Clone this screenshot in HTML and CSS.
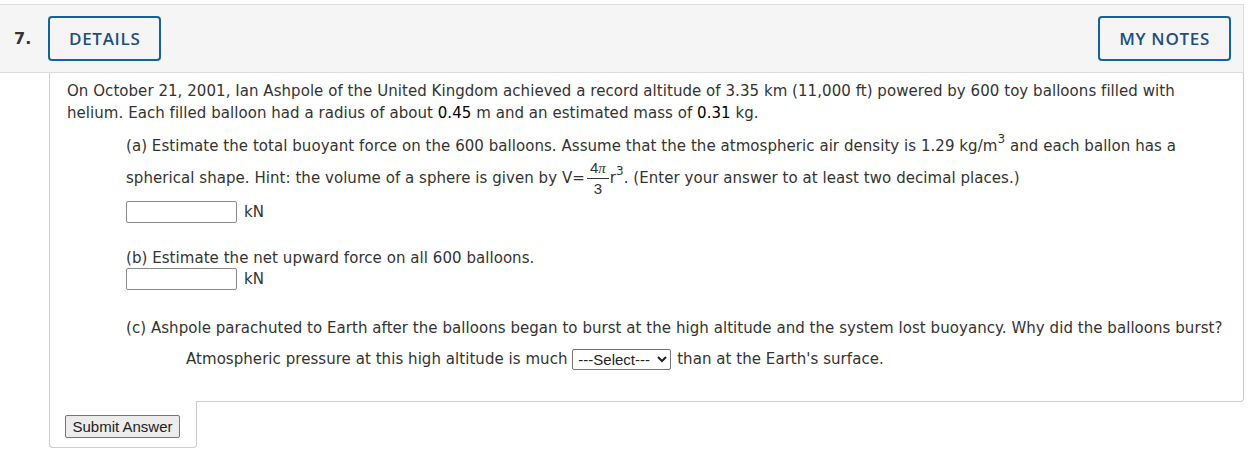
FILE: index.html
```html
<!DOCTYPE html>
<html>
<head>
<meta charset="utf-8">
<link rel="stylesheet" href="styles.css">
</head>
<body>
<div class="question">
  <div class="qhead">
    <span class="qnum">7.</span>
    <button class="hbtn">DETAILS</button>
    <span class="spacer"></span>
    <button class="hbtn">MY NOTES</button>
  </div>
  <div class="qbody">
    <p class="intro">On October 21, 2001, Ian Ashpole of the United Kingdom achieved a record altitude of 3.35 km (11,000 ft) powered by 600 toy balloons filled with helium. Each filled balloon had a radius of about <span class="val">0.45</span> m and an estimated mass of <span class="val">0.31</span> kg.</p>
    <div class="part pa">
      <p class="ptext">(a) Estimate the total buoyant force on the 600 balloons. Assume that the the atmospheric air density is 1.29 kg/m<sup>3</sup> and each ballon has a spherical shape. Hint: the volume of a sphere is given by V=<span class="frac"><span class="num">4<i>π</i></span><span class="den">3</span></span>r<sup>3</sup>. (Enter your answer to at least two decimal places.)</p>
      <div class="ans"><input class="box" type="text"><span class="unit">kN</span></div>
    </div>
    <div class="part pb">
      <p class="ptext">(b) Estimate the net upward force on all 600 balloons.</p>
      <div class="ans"><input class="box" type="text"><span class="unit">kN</span></div>
    </div>
    <div class="part pc">
      <p class="ptext">(c) Ashpole parachuted to Earth after the balloons began to burst at the high altitude and the system lost buoyancy. Why did the balloons burst?</p>
      <p class="sel-line">Atmospheric pressure at this high altitude is much <select class="sel"><option>---Select---</option><option>greater</option><option>less</option></select> than at the Earth's surface.</p>
    </div>
  </div>
  <div class="qfoot">
    <button class="submit">Submit Answer</button>
  </div>
</div>
</body>
</html>
```

FILE: styles.css
```css
* { box-sizing: border-box; }
body {
  margin: 0;
  padding-top: 4px;
  background: #fff;
  font-family: "DejaVu Sans", Verdana, sans-serif;
  color: #333;
}
.question { width: 1244px; }
.qhead {
  display: flex;
  align-items: center;
  height: 69px;
  background: #f5f5f5;
  border-top: 1px solid #dcdcdc;
  border-right: 1px solid #dcdcdc;
  border-bottom: 1px solid #dcdcdc;
  padding: 0 12px 0 14px;
}
.qnum {
  font-weight: bold;
  font-size: 16px;
  color: #333;
  width: 34px;
}
.spacer { flex: 1; }
.hbtn {
  height: 45px;
  padding: 0 19px;
  background: #f5f5f5;
  border: 2px solid #14629b;
  border-radius: 4px;
  color: #1e4f7e;
  font-family: "Open Sans", "DejaVu Sans", sans-serif;
  font-weight: 600;
  font-size: 17px;
  letter-spacing: 0.7px;
}
.qbody {
  margin-left: 49px;
  border-left: 1px solid #ccc;
  border-right: 1px solid #ccc;
  border-bottom: 1px solid #ccc;
  border-bottom-right-radius: 4px;
  padding: 7px 14px 31px 17px;
  font-size: 15px;
  line-height: 22px;
  letter-spacing: 0.05px;
}
p { margin: 0; }
.val { color: #000; }
.part { margin-left: 59px; }
.pa { margin-top: 11px; }
.ptext sup { font-size: 12px; line-height: 0; vertical-align: 8px; }
.pa .ptext { line-height: 32px; margin-top: -5px; }
.frac {
  display: inline-flex;
  flex-direction: column;
  align-items: center;
  vertical-align: 10px;
  font-family: "Liberation Sans", Arial, sans-serif;
  font-size: 15px;
  line-height: 11px;
  letter-spacing: 0;
  margin: 0 1px 0 2px;
}
.frac i { font-family: "Liberation Serif", serif; }
.frac .num { border-bottom: 1px solid #333; padding: 0 3px 4px; }
.frac .den { padding-top: 4px; }
.ans {
  display: flex;
  align-items: center;
  gap: 7px;
  margin-top: 6px;
  height: 24px;
}
.box {
  width: 111px;
  height: 22px;
  border: 1px solid #8a8a8a;
  border-radius: 2px;
  background: #fff;
  padding: 0;
}
.unit { font-size: 15px; }
.pb { margin-top: 23px; }
.pb .ans { margin-top: -2px; }
.pc { margin-top: 26px; }
.sel-line { margin-left: 60px; margin-top: 9px; }
.sel {
  width: 99px;
  height: 21px;
  font-family: "Liberation Sans", Arial, sans-serif;
  font-size: 15px;
  letter-spacing: 0;
  color: #222;
  border: 1px solid #767676;
  border-radius: 2px;
  background: #fff;
  vertical-align: middle;
  padding: 0 1px;
  margin: 0 1px 0 0;
}
.qfoot {
  margin-left: 49px;
  margin-top: -1px;
  width: 148px;
  background: #fff;
  border-left: 1px solid #ccc;
  border-right: 1px solid #ccc;
  border-bottom: 1px solid #ccc;
  border-radius: 0 0 4px 4px;
  padding: 14px 0 9px 15px;
}
.submit {
  display: block;
  width: 115px;
  height: 23px;
  font-family: "Liberation Sans", Arial, sans-serif;
  font-size: 15px;
  color: #222;
  background: #ececec;
  border: 1px solid #767676;
  border-radius: 2px;
  padding: 0;
}
```
